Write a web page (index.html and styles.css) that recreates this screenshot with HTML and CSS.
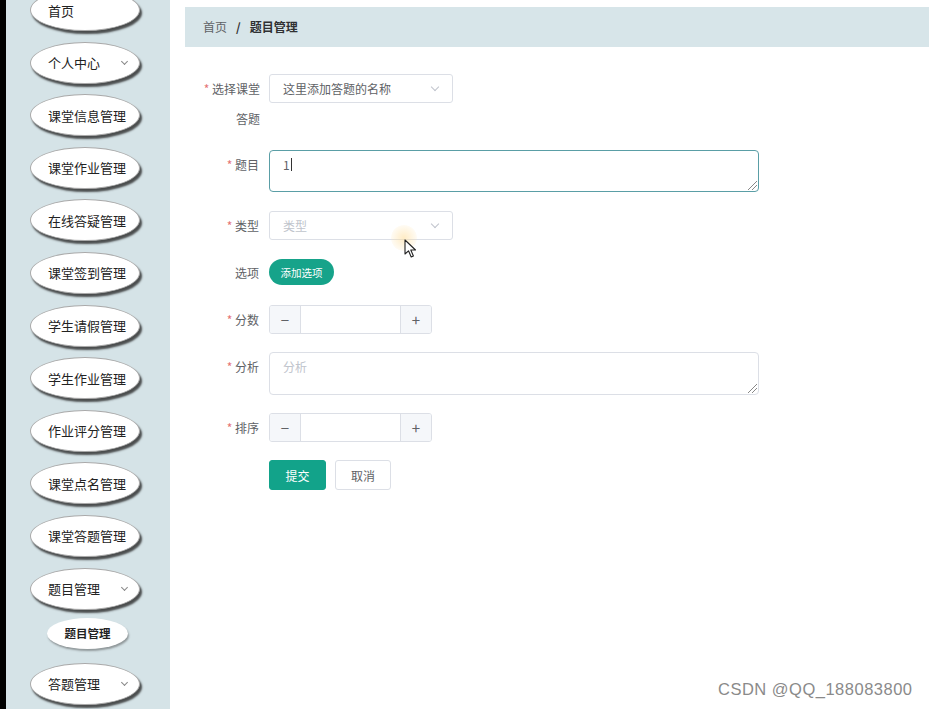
FILE: index.html
```html
<!DOCTYPE html>
<html lang="zh">
<head>
<meta charset="utf-8">
<title>题目管理</title>
<link rel="stylesheet" href="styles.css">
</head>
<body>
<div class="page">
  <div class="stripe"></div>
  <aside class="sidebar">
    <div class="menu first"><span>首页</span></div>
    <div class="menu"><span>个人中心</span><i class="chev"></i></div>
    <div class="menu"><span>课堂信息管理</span></div>
    <div class="menu"><span>课堂作业管理</span></div>
    <div class="menu"><span>在线答疑管理</span></div>
    <div class="menu"><span>课堂签到管理</span></div>
    <div class="menu"><span>学生请假管理</span></div>
    <div class="menu"><span>学生作业管理</span></div>
    <div class="menu"><span>作业评分管理</span></div>
    <div class="menu"><span>课堂点名管理</span></div>
    <div class="menu"><span>课堂答题管理</span></div>
    <div class="menu open"><span>题目管理</span><i class="chev"></i></div>
    <div class="submenu"><span>题目管理</span></div>
    <div class="menu"><span>答题管理</span><i class="chev"></i></div>
  </aside>
  <main class="main">
    <div class="crumb"><span class="c1">首页</span><span class="sep">/</span><span class="c2">题目管理</span></div>
    <form class="form">
      <div class="item item-first">
        <label class="label"><em>*</em> 选择课堂<br>答题</label>
        <div class="select"><span class="val">这里添加答题的名称</span><i class="chev gray"></i></div>
      </div>
      <div class="item item-ta">
        <label class="label"><em>*</em> 题目</label>
        <div class="textarea focus"><span class="val">1</span><span class="caret"></span><i class="grip"></i></div>
      </div>
      <div class="item">
        <label class="label"><em>*</em> 类型</label>
        <div class="select"><span class="ph">类型</span><i class="chev gray"></i></div>
      </div>
      <div class="item item-opt">
        <label class="label">选项</label>
        <button type="button" class="pill">添加选项</button>
      </div>
      <div class="item">
        <label class="label"><em>*</em> 分数</label>
        <div class="num"><span class="nb">−</span><span class="nin"></span><span class="nb">+</span></div>
      </div>
      <div class="item">
        <label class="label"><em>*</em> 分析</label>
        <div class="textarea"><span class="ph">分析</span><i class="grip"></i></div>
      </div>
      <div class="item">
        <label class="label"><em>*</em> 排序</label>
        <div class="num"><span class="nb">−</span><span class="nin"></span><span class="nb">+</span></div>
      </div>
      <div class="item actions">
        <button type="button" class="btn primary">提交</button>
        <button type="button" class="btn">取消</button>
      </div>
    </form>
  </main>
</div>
<div class="cursor">
  <div class="halo"></div>
  <svg width="14" height="20" viewBox="0 0 14 20"><path d="M1 1 L1 15 L4.5 11.8 L7.2 18 L9.4 17 L6.8 11 L11.5 11 Z" fill="#fff" stroke="#222" stroke-width="1.1" stroke-linejoin="round"/></svg>
</div>
<div class="wm">CSDN @QQ_188083800</div>
</body>
</html>
```

FILE: styles.css
```css
* { box-sizing: border-box; }
html, body { margin: 0; padding: 0; }
body {
  width: 929px; height: 709px; overflow: hidden; background: #fff;
  font-family: "Noto Sans CJK SC", "Liberation Sans", sans-serif;
  color: #333;
}
.page { display: flex; height: 709px; }
.stripe { width: 6px; background: #000; flex: none; }
.sidebar {
  width: 164px; flex: none; background: #d5e3e7;
  display: flex; flex-direction: column; align-items: flex-start;
  padding-left: 24px; padding-top: 0; overflow: hidden;
}
.menu {
  width: 110px; height: 42px; flex: none;
  border-radius: 50%;
  background: #fff;
  border: 1px solid #aaa;
  box-shadow: 2px 3px 2px rgba(40,40,40,0.8);
  display: flex; align-items: center; justify-content: space-between;
  padding: 0 12px 0 17px;
  font-size: 13px; color: #222;
  margin-bottom: 10.6px;
}
.menu.first { margin-top: -11px; }
.menu.open { margin-bottom: 8px; }
.chev {
  display: inline-block; width: 5px; height: 5px;
  border-right: 1px solid #888; border-bottom: 1px solid #888;
  transform: rotate(45deg); margin-top: -3px;
}
.submenu {
  width: 81px; height: 31px; flex: none; margin-left: 17px; margin-bottom: 14px;
  border-radius: 50%; background: #fff;
  box-shadow: 1px 2px 2px rgba(60,60,60,0.45);
  display: flex; align-items: center; justify-content: center;
  font-size: 11.5px; font-weight: 600; color: #222;
}
.main { flex: 1; padding-left: 15px; padding-top: 7px; }
.crumb {
  height: 40px; background: #d7e5e9;
  display: flex; align-items: center; padding-left: 18px; padding-bottom: 2px;
  font-size: 12px;
}
.crumb .c1 { color: #606266; }
.crumb .sep { margin: 0 9px; font-weight: 700; color: #333; }
.crumb .c2 { color: #303133; font-weight: 600; }
.form { padding-top: 27px; padding-left: 14px; }
.item { display: flex; align-items: flex-start; margin-bottom: 18px; }
.item-first { margin-bottom: 16px; }
.item-ta { margin-bottom: 19px; }
.label {
  width: 70px; flex: none; padding-right: 10px;
  text-align: right; font-size: 12px; line-height: 29px; color: #606266;
}
.item-first .label { line-height: 30px; padding-right: 9px; }
.label em { font-style: normal; color: #e57373; }
.select {
  width: 184px; height: 29px; border: 1px solid #dcdfe6; border-radius: 3px;
  display: flex; align-items: center; justify-content: space-between;
  padding: 0 14px 0 13px; font-size: 12px; background: #fff;
}
.select .val { color: #606266; }
.ph { color: #c0c4cc; font-size: 12px; }
.chev.gray { border-color: #c0c4cc; width: 6px; height: 6px; }
.textarea {
  position: relative; width: 490px; height: 43px;
  border: 1px solid #dcdfe6; border-radius: 4px; padding: 5px 13px;
  font-size: 12px; line-height: 18px; display: flex; align-items: flex-start;
}
.textarea.focus { border: 1.5px solid #5a9ea6; height: 42px; }
.textarea .val { color: #606266; }
.caret { display: inline-block; width: 1px; height: 13px; background: #333; margin-top: 2px; margin-left: 1px; }
.grip {
  position: absolute; right: 1px; bottom: 1px; width: 9px; height: 9px;
  background: linear-gradient(135deg, transparent 45%, #888 45%, #888 52%, transparent 52%, transparent 70%, #888 70%, #888 77%, transparent 77%);
}
.pill {
  height: 26px; width: 65px; border: none; border-radius: 13px;
  background: #16a38a; color: #fff; font-size: 10.5px; font-family: inherit;
  margin-top: 1px; padding: 0;
}
.item-opt { margin-bottom: 18px; }
.num {
  width: 163px; height: 29px; border: 1px solid #dcdfe6; border-radius: 3px;
  display: flex; overflow: hidden;
}
.nb {
  width: 31px; flex: none; background: #f5f7fa; color: #606266;
  display: flex; align-items: center; justify-content: center; font-size: 15px;
}
.nb:first-child { border-right: 1px solid #dcdfe6; }
.nb:last-child { border-left: 1px solid #dcdfe6; }
.nin { flex: 1; }
.actions { padding-left: 70px; gap: 9px; margin-top: 0; }
.btn {
  width: 56px; height: 30px; border: 1px solid #dcdfe6; border-radius: 3px;
  background: #fff; color: #606266; font-size: 12px; font-family: inherit; padding: 0;
}
.btn.primary { background: #12a38a; border-color: #12a38a; color: #fff; width: 57px; }
.cursor { position: absolute; left: 404px; top: 239px; }
.cursor svg { position: relative; display: block; }
.halo {
  position: absolute; left: -13px; top: -14px; width: 26px; height: 26px; border-radius: 50%;
  background: radial-gradient(circle, rgba(255,220,150,0.55), rgba(255,230,180,0.15) 70%, transparent 72%);
}
.wm {
  position: absolute; left: 718px; top: 680px;
  font-family: "Liberation Sans", sans-serif; font-size: 16.5px; color: #8a8a8a;
  letter-spacing: 0.5px;
}
```
